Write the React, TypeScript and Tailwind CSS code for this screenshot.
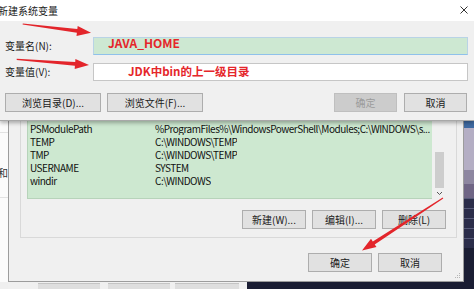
import React from "react";

type Pt = [number, number];

function arrowPoints(from: Pt, to: Pt, tail = 1.2, shaft = 3.6, headLen = 14, headW = 10) {
    const [x1, y1] = from
    const [x2, y2] = to
    const len = Math.hypot(x2 - x1, y2 - y1)
    const ux = (x2 - x1) / len
    const uy = (y2 - y1) / len
    const nx = -uy
    const ny = ux
    const bx = x2 - ux * headLen
    const by = y2 - uy * headLen
    const pts: Pt[] = [
        [x1 + nx * tail / 2, y1 + ny * tail / 2],
        [bx + nx * shaft / 2, by + ny * shaft / 2],
        [bx + nx * headW / 2, by + ny * headW / 2],
        [x2, y2],
        [bx - nx * headW / 2, by - ny * headW / 2],
        [bx - nx * shaft / 2, by - ny * shaft / 2],
        [x1 - nx * tail / 2, y1 - ny * tail / 2],
    ]
    return pts.map(p => p.map(v => v.toFixed(1)).join(",")).join(" ")
}

function Btn({ label, className = "", disabled = false }: { label: string, className?: string, disabled?: boolean }) {
    return (
        <div
            className={
                "h-[19px] flex items-center justify-center text-[10px] leading-[12px] border " +
                (disabled ? "bg-[#cccccc] border-[#bfbfbf] text-[#9b9b9b] " : "bg-[#e1e1e1] border-[#adadad] text-[#1a1a1a] ") +
                className
            }>
            {label}
        </div>
    )
}

const rows: [string, string][] = [
    ["PSModulePath", "%ProgramFiles%\\WindowsPowerShell\\Modules;C:\\WINDOWS\\s..."],
    ["TEMP", "C:\\WINDOWS\\TEMP"],
    ["TMP", "C:\\WINDOWS\\TEMP"],
    ["USERNAME", "SYSTEM"],
    ["windir", "C:\\WINDOWS"],
]

function NewVariableDialog() {
    return (
        <div className="relative z-10 h-[121px] bg-[#f0f0f0] border-b border-[#a8a8a8] shadow-[0_2px_4px_rgba(0,0,0,0.3)]">
            <div className="h-[21px] bg-white flex items-center justify-between pr-[6px]">
                <span className="text-[10px] leading-[12px] text-[#222] -ml-[2px]">新建系统变量</span>
                <svg width="8" height="8" viewBox="0 0 8 8" className="mt-[-1px]">
                    <path d="M0.5 0.5 L7.5 7.5 M7.5 0.5 L0.5 7.5" stroke="#333" strokeWidth="1" />
                </svg>
            </div>

            <div className="pl-[5px] pt-[16px]">
                <div className="flex items-center h-[18px] pr-[6px]">
                    <span className="w-[88px] text-[10px] leading-[12px] text-[#1a1a1a]">变量名(N):</span>
                    <div className="flex-1 h-[18px] bg-[#cde8d2] border border-[#b9d3e6] border-b-[#8fc1ea] pl-[14px] flex items-start">
                        <span className="text-[12px] font-bold text-[#e5262b] leading-none mt-[-1px]">JAVA_HOME</span>
                    </div>
                </div>

                <div className="flex items-center h-[18px] mt-[8px] pr-[6px]">
                    <span className="w-[88px] text-[10px] leading-[12px] text-[#1a1a1a]">变量值(V):</span>
                    <div className="flex-1 h-[18px] bg-white border border-[#c6c6c6] pl-[34px] flex items-center">
                        <span className="text-[11.5px] font-bold text-[#e5262b] leading-none">JDK中bin的上一级目录</span>
                    </div>
                </div>

                <div className="flex items-center mt-[12px] pr-[7px]">
                    <Btn label="浏览目录(D)..." className="w-[96px]" />
                    <Btn label="浏览文件(F)..." className="w-[96px] ml-[6px]" />
                    <Btn label="确定" className="w-[63px] ml-auto" disabled />
                    <Btn label="取消" className="w-[63px] ml-[7px]" />
                </div>
            </div>
        </div>
    )
}

function EnvDialog() {
    return (
        <div className="h-[161px] bg-[#f0f0f0] border-x border-b border-[#9c9c9c] flex flex-col relative">
            <div className="ml-[11px] w-[437px] h-[117px] border-x border-b border-[#d9d9d9] flex flex-col">
                <div className="flex ml-[6px] h-[78px]">
                    <div className="w-[405px] bg-[#cde8d0] border-l border-b border-[#b7d3ba] pt-[1px] text-[10px] tracking-[-0.5px] text-[#111] overflow-hidden">
                        {rows.map(([name, value]) => (
                            <div key={name} className="flex h-[13px] leading-[13px] items-center whitespace-nowrap">
                                <span className="w-[127px] shrink-0 pl-[2px]">{name}</span>
                                <span className="overflow-hidden">{value}</span>
                            </div>
                        ))}
                    </div>
                    <div className="w-[14px] bg-[#f0f0f0] flex flex-col items-center">
                        <div className="h-[31px]" />
                        <div className="w-[9px] h-[36px] bg-[#cdcdcd]" />
                        <div className="flex-1 flex items-center">
                            <svg width="7" height="5" viewBox="0 0 7 5">
                                <path d="M1 1 L3.5 3.5 L6 1" fill="none" stroke="#555" strokeWidth="1" />
                            </svg>
                        </div>
                    </div>
                </div>

                <div className="flex justify-end gap-[6px] pr-[10px] mt-[11px]">
                    <Btn label="新建(W)..." className="w-[64px]" />
                    <Btn label="编辑(I)..." className="w-[64px]" />
                    <Btn label="删除(L)" className="w-[64px]" />
                </div>
            </div>

            <div className="flex justify-end gap-[6px] pr-[21px] mt-[15px]">
                <Btn label="确定" className="w-[64px]" />
                <Btn label="取消" className="w-[64px]" />
            </div>

            <svg width="6" height="6" viewBox="0 0 6 6" className="absolute right-[2px] bottom-[2px]">
                <rect x="4" y="0" width="1" height="1" fill="#b5b5b5" />
                <rect x="2" y="2" width="1" height="1" fill="#b5b5b5" />
                <rect x="4" y="2" width="1" height="1" fill="#b5b5b5" />
                <rect x="0" y="4" width="1" height="1" fill="#b5b5b5" />
                <rect x="2" y="4" width="1" height="1" fill="#b5b5b5" />
                <rect x="4" y="4" width="1" height="1" fill="#b5b5b5" />
            </svg>
        </div>
    )
}

export default function App() {
    return (
        <div className="w-[474px] h-[289px] overflow-hidden relative bg-[#1c2036] font-['Noto_Sans_CJK_SC',sans-serif]">
            <NewVariableDialog />

            <div className="flex h-[168px]">
                {/* window behind, left edge */}
                <div className="w-[8px] bg-[#fbfbfb] flex flex-col overflow-hidden">
                    <div className="h-[11px]" />
                    <div className="border-t border-[#e2e2e2] h-[65px] flex flex-col">
                        <div className="h-[33px]" />
                        <div className="flex justify-end h-[13px] leading-[13px] items-center text-[10px] text-[#333] whitespace-nowrap">和</div>
                    </div>
                    <div className="border-t border-[#e2e2e2] flex-1" />
                    <div className="h-[7px] bg-[#efefef]" />
                </div>

                <div className="w-[456px] flex flex-col">
                    <EnvDialog />
                    <div className="h-[7px] flex">
                        <div className="w-[239px] bg-[#f0f0f0] flex items-end pt-[1px]">
                            <div className="w-[30px]" />
                            <div className="w-[62px] h-[6px] bg-[#dedede] border-t border-[#c4c4c4]" />
                            <div className="w-[8px]" />
                            <div className="w-[62px] h-[6px] bg-[#dedede] border-t border-[#c4c4c4]" />
                            <div className="w-[5px]" />
                            <div className="w-[64px] h-[6px] bg-[#dedede] border-t border-[#c4c4c4]" />
                        </div>
                        <div className="flex-1 bg-[#1a1d33]" />
                    </div>
                </div>

                {/* desktop, right edge */}
                <div className="flex-1 flex flex-col">
                    <div className="h-[7px] bg-[#3f6aa2]" />
                    <div className="h-[42px] bg-[#b4aec4]" />
                    <div className="h-[14px] bg-[#8d86a0]" />
                    <div className="h-[14px] bg-[#6f6585]" />
                    <div className="h-[10px] bg-[#2b2d4a] border-t border-[#565a78]" />
                    <div className="h-[10px] bg-[#2b2d4a] border-t border-[#565a78]" />
                    <div className="h-[10px] bg-[#2b2d4a] border-t border-[#565a78]" />
                    <div className="h-[10px] bg-[#2b2d4a] border-t border-[#565a78]" />
                    <div className="h-[10px] bg-[#2b2d4a] border-t border-[#565a78]" />
                    <div className="flex-1 bg-[#1a1d33]" />
                </div>
            </div>

            <svg width="474" height="289" className="absolute inset-0 z-20 pointer-events-none">
                <polygon points={arrowPoints([22.7, 24], [91, 32.7])} fill="#e3252b" />
                <polygon points={arrowPoints([16.7, 59.3], [89, 65])} fill="#e3252b" />
                <polygon points={arrowPoints([443, 198], [362, 250.5])} fill="#e3252b" />
            </svg>
        </div>
    );
}
